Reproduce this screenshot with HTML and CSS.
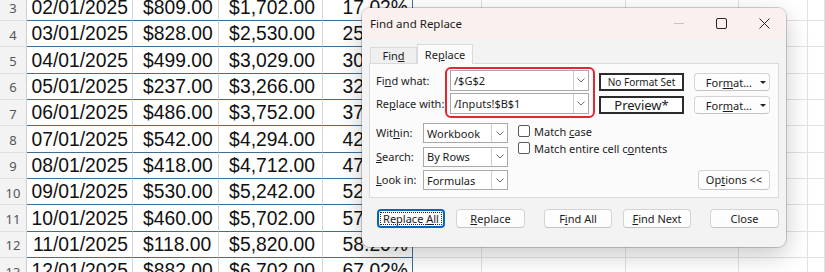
FILE: index.html
```html
<!DOCTYPE html>
<html lang="en">
<head>
  <meta charset="UTF-8" />
  <title>Find and Replace</title>
  <link rel="stylesheet" href="styles.css">
</head>
<body>

  <!-- Worksheet behind the dialog -->
  <div class="sheet">
    <div class="row">
      <div class="rh">3</div>
      <div class="cell date">02/01/2025</div>
      <div class="cell money"><span>$</span><span>809.00</span></div>
      <div class="cell money"><span>$</span><span>1,702.00</span></div>
      <div class="cell pct">17.02%</div>
      <div class="blank"></div><div class="blank"></div><div class="blank"></div><div class="blank"></div><div class="blank"></div>
    </div>
    <div class="row">
      <div class="rh">4</div>
      <div class="cell date">03/01/2025</div>
      <div class="cell money"><span>$</span><span>828.00</span></div>
      <div class="cell money"><span>$</span><span>2,530.00</span></div>
      <div class="cell pct">25.30%</div>
      <div class="blank"></div><div class="blank"></div><div class="blank"></div><div class="blank"></div><div class="blank"></div>
    </div>
    <div class="row">
      <div class="rh">5</div>
      <div class="cell date">04/01/2025</div>
      <div class="cell money"><span>$</span><span>499.00</span></div>
      <div class="cell money"><span>$</span><span>3,029.00</span></div>
      <div class="cell pct">30.29%</div>
      <div class="blank"></div><div class="blank"></div><div class="blank"></div><div class="blank"></div><div class="blank"></div>
    </div>
    <div class="row">
      <div class="rh">6</div>
      <div class="cell date">05/01/2025</div>
      <div class="cell money"><span>$</span><span>237.00</span></div>
      <div class="cell money"><span>$</span><span>3,266.00</span></div>
      <div class="cell pct">32.66%</div>
      <div class="blank"></div><div class="blank"></div><div class="blank"></div><div class="blank"></div><div class="blank"></div>
    </div>
    <div class="row">
      <div class="rh">7</div>
      <div class="cell date">06/01/2025</div>
      <div class="cell money"><span>$</span><span>486.00</span></div>
      <div class="cell money"><span>$</span><span>3,752.00</span></div>
      <div class="cell pct">37.52%</div>
      <div class="blank"></div><div class="blank"></div><div class="blank"></div><div class="blank"></div><div class="blank"></div>
    </div>
    <div class="row">
      <div class="rh">8</div>
      <div class="cell date">07/01/2025</div>
      <div class="cell money"><span>$</span><span>542.00</span></div>
      <div class="cell money"><span>$</span><span>4,294.00</span></div>
      <div class="cell pct">42.94%</div>
      <div class="blank"></div><div class="blank"></div><div class="blank"></div><div class="blank"></div><div class="blank"></div>
    </div>
    <div class="row">
      <div class="rh">9</div>
      <div class="cell date">08/01/2025</div>
      <div class="cell money"><span>$</span><span>418.00</span></div>
      <div class="cell money"><span>$</span><span>4,712.00</span></div>
      <div class="cell pct">47.12%</div>
      <div class="blank"></div><div class="blank"></div><div class="blank"></div><div class="blank"></div><div class="blank"></div>
    </div>
    <div class="row">
      <div class="rh">10</div>
      <div class="cell date">09/01/2025</div>
      <div class="cell money"><span>$</span><span>530.00</span></div>
      <div class="cell money"><span>$</span><span>5,242.00</span></div>
      <div class="cell pct">52.42%</div>
      <div class="blank"></div><div class="blank"></div><div class="blank"></div><div class="blank"></div><div class="blank"></div>
    </div>
    <div class="row">
      <div class="rh">11</div>
      <div class="cell date">10/01/2025</div>
      <div class="cell money"><span>$</span><span>460.00</span></div>
      <div class="cell money"><span>$</span><span>5,702.00</span></div>
      <div class="cell pct">57.02%</div>
      <div class="blank"></div><div class="blank"></div><div class="blank"></div><div class="blank"></div><div class="blank"></div>
    </div>
    <div class="row">
      <div class="rh">12</div>
      <div class="cell date">11/01/2025</div>
      <div class="cell money"><span>$</span><span>118.00</span></div>
      <div class="cell money"><span>$</span><span>5,820.00</span></div>
      <div class="cell pct">58.20%</div>
      <div class="blank"></div><div class="blank"></div><div class="blank"></div><div class="blank"></div><div class="blank"></div>
    </div>
    <div class="row">
      <div class="rh">13</div>
      <div class="cell date">12/01/2025</div>
      <div class="cell money"><span>$</span><span>882.00</span></div>
      <div class="cell money"><span>$</span><span>6,702.00</span></div>
      <div class="cell pct">67.02%</div>
      <div class="blank"></div><div class="blank"></div><div class="blank"></div><div class="blank"></div><div class="blank"></div>
    </div>
  </div>

  <!-- Find and Replace dialog -->
  <div class="dialog">
    <div class="titlebar">
      <span class="title">Find and Replace</span>
      <span class="wb"><svg width="10" height="10" viewBox="0 0 10 10"><line x1="0" y1="5.5" x2="10" y2="5.5" stroke="#c4c4c4" stroke-width="1"/></svg></span>
      <span class="wb"><svg width="11" height="11" viewBox="0 0 11 11"><rect x="0.5" y="0.5" width="10" height="10" rx="1.5" fill="none" stroke="#262626" stroke-width="1"/></svg></span>
      <span class="wb"><svg width="11" height="11" viewBox="0 0 11 11"><path d="M0.5 0.5 L10.5 10.5 M10.5 0.5 L0.5 10.5" stroke="#262626" stroke-width="1"/></svg></span>
    </div>

    <div class="dlg-body">
      <div class="tabs">
        <div class="tab">Fin<u>d</u></div>
        <div class="tab active">Re<u>p</u>lace</div>
      </div>

      <div class="panel">
        <div class="find-row">
          <div class="labels">
            <span class="lbl">Fi<u>n</u>d what:</span>
            <span class="lbl">Re<u>p</u>lace with:</span>
          </div>
          <div class="highlight">
            <div class="combo wide"><span class="val">/$G$2</span><span class="drop"><svg width="8" height="5" viewBox="0 0 8 5"><polyline points="0.5,0.5 4,4 7.5,0.5" fill="none" stroke="#6e6e6e"/></svg></span></div>
            <div class="combo wide"><span class="val">/Inputs!$B$1</span><span class="drop"><svg width="8" height="5" viewBox="0 0 8 5"><polyline points="0.5,0.5 4,4 7.5,0.5" fill="none" stroke="#6e6e6e"/></svg></span></div>
          </div>
          <div class="previews">
            <div class="preview">No Format Set</div>
            <div class="preview big">Preview*</div>
          </div>
          <div class="fmt-btns">
            <div class="btn fmt"><span>For<u>m</u>at...</span><span class="caret"></span></div>
            <div class="btn fmt"><span>For<u>m</u>at...</span><span class="caret"></span></div>
          </div>
        </div>

        <div class="opts">
          <div class="opt-grid">
            <span class="lbl">Wit<u>h</u>in:</span>
            <div class="combo"><span class="val">Workbook</span><span class="drop"><svg width="8" height="5" viewBox="0 0 8 5"><polyline points="0.5,0.5 4,4 7.5,0.5" fill="none" stroke="#6e6e6e"/></svg></span></div>
            <span class="lbl"><u>S</u>earch:</span>
            <div class="combo"><span class="val">By Rows</span><span class="drop"><svg width="8" height="5" viewBox="0 0 8 5"><polyline points="0.5,0.5 4,4 7.5,0.5" fill="none" stroke="#6e6e6e"/></svg></span></div>
            <span class="lbl"><u>L</u>ook in:</span>
            <div class="combo"><span class="val">Formulas</span><span class="drop"><svg width="8" height="5" viewBox="0 0 8 5"><polyline points="0.5,0.5 4,4 7.5,0.5" fill="none" stroke="#6e6e6e"/></svg></span></div>
          </div>
          <div class="checks">
            <div class="check"><span class="box"></span><span>Match <u>c</u>ase</span></div>
            <div class="check"><span class="box"></span><span>Match entire cell c<u>o</u>ntents</span></div>
          </div>
          <div class="btn options">Op<u>t</u>ions &lt;&lt;</div>
        </div>
      </div>

      <div class="actions">
        <div class="btn focus">Replace <u>A</u>ll</div>
        <div class="btn"><u>R</u>eplace</div>
        <div class="btn spaced">F<u>i</u>nd All</div>
        <div class="btn"><u>F</u>ind Next</div>
        <div class="btn spaced">Close</div>
      </div>
    </div>
  </div>

</body>
</html>
```

FILE: styles.css
```css
* {
  box-sizing: border-box;
}

body {
  margin: 0;
  overflow: hidden;
  background: #fff;
  font-family: 'Liberation Sans', Arial, sans-serif;
}

/* Worksheet */
.sheet {
  margin-top: -5.33px;
}

.row {
  display: grid;
  grid-template-columns: 27px 106px 86px 104px 90px 69px 144px 113px 69px 1fr;
  height: 26.33px;
}

.rh {
  background: #f3f3f3;
  border-right: 1px solid #cfcfcf;
  border-bottom: 1px solid #e0e0e0;
  color: #555;
  font: 13px 'Noto Sans', sans-serif;
  display: flex;
  align-items: center;
  justify-content: center;
  padding-top: 2px;
}

.cell {
  border-right: 1px solid #d6d6d6;
  border-bottom: 1px solid #3f6f95;
  color: #111;
  font-size: 19.3px;
  line-height: 22px;
  display: flex;
  align-items: flex-end;
  padding-bottom: 1px;
}

.date {
  justify-content: flex-end;
  padding-right: 4px;
}

.money {
  justify-content: space-between;
  padding: 0 7px 1px 10px;
}

.pct {
  justify-content: flex-end;
  padding-right: 4px;
  border-right-color: #3f6f95;
}

.blank {
  border-right: 1px solid #e2e2e2;
  border-bottom: 1px solid #e2e2e2;
}

/* Dialog */
.dialog {
  position: absolute;
  left: 362px;
  top: 8px;
  width: 424px;
  height: 239px;
  background: #f3f3f3;
  border-radius: 8px;
  overflow: hidden;
  box-shadow: 0 0 0 1px rgba(0, 0, 0, 0.18), 0 8px 24px rgba(0, 0, 0, 0.22);
  font: 11px 'Noto Sans', sans-serif;
  color: #1b1b1b;
}

.titlebar {
  height: 30px;
  background: #faf1ee;
  display: flex;
  align-items: center;
  padding-left: 8px;
}

.title {
  flex: 1;
  font-size: 11.5px;
}

.wb {
  width: 43px;
  height: 30px;
  display: flex;
  align-items: center;
  justify-content: center;
}

.dlg-body {
  padding: 6px 7px 0 7px;
}

.tabs {
  display: flex;
  align-items: flex-end;
  height: 20px;
  margin-bottom: -1px;
  position: relative;
  z-index: 1;
}

.tab {
  width: 47px;
  height: 16px;
  margin: 0 0 1px 1px;
  background: #efefef;
  border: 1px solid #dadada;
  border-bottom: none;
  text-align: center;
  line-height: 15px;
}

.tab.active {
  width: 56px;
  height: 20px;
  margin: 0;
  background: #fbfbfb;
  line-height: 19px;
}

.panel {
  background: #fbfbfb;
  border: 1px solid #dadada;
  padding: 3px 8px 7px 6px;
}

.find-row {
  display: flex;
  align-items: flex-start;
}

.labels {
  width: 69px;
  padding-top: 3px;
  display: flex;
  flex-direction: column;
  gap: 2px;
}

.lbl {
  display: block;
  height: 21px;
  line-height: 21px;
  white-space: nowrap;
}

.highlight {
  border: 2px solid #e3262f;
  border-radius: 6px;
  padding: 1px 4px 2px 3px;
  display: flex;
  flex-direction: column;
  gap: 2px;
}

.combo {
  height: 20px;
  background: #fff;
  border: 1px solid #a9a9a9;
  display: flex;
}

.combo.wide {
  width: 139px;
  height: 21px;
}

.combo .val {
  flex: 1;
  display: flex;
  align-items: center;
  padding-left: 3px;
  white-space: nowrap;
}

.drop {
  width: 15px;
  border-left: 1px solid #cfcfcf;
  display: flex;
  align-items: center;
  justify-content: center;
}

.previews,
.fmt-btns {
  margin-top: 6px;
  display: flex;
  flex-direction: column;
  gap: 5px;
}

.previews {
  margin-left: 4px;
}

.preview {
  width: 85px;
  height: 18px;
  border: 2px solid #2b2b2b;
  background: #fff;
  text-align: center;
  line-height: 14px;
  font-size: 10px;
  white-space: nowrap;
}

.preview.big {
  font-size: 13px;
}

.fmt-btns {
  margin-left: 10px;
}

.btn {
  height: 19px;
  background: #fdfdfd;
  border: 1px solid #d3d3d3;
  border-bottom-color: #c4c4c4;
  border-radius: 4px;
  text-align: center;
  line-height: 17px;
  white-space: nowrap;
}

.btn.fmt {
  width: 76px;
  height: 18px;
  display: flex;
  align-items: center;
  justify-content: flex-end;
  padding-right: 3px;
  gap: 8px;
}

.caret {
  width: 0;
  height: 0;
  border-left: 3px solid transparent;
  border-right: 3px solid transparent;
  border-top: 3px solid #222;
}

.opts {
  margin-top: 5px;
  display: flex;
}

.opt-grid {
  display: grid;
  grid-template-columns: 47px 85px;
  row-gap: 3.5px;
}

.opt-grid .lbl {
  height: 20px;
  line-height: 20px;
}

.opt-grid .drop {
  width: 16px;
}

.checks {
  margin-left: 10px;
  padding-top: 2px;
  display: flex;
  flex-direction: column;
  gap: 5px;
}

.check {
  height: 12px;
  display: flex;
  align-items: center;
  gap: 4px;
  white-space: nowrap;
}

.box {
  width: 12px;
  height: 12px;
  border: 1px solid #5a5a5a;
  border-radius: 2px;
  background: #fff;
}

.btn.options {
  width: 72px;
  height: 20px;
  line-height: 18px;
  margin-left: auto;
  align-self: flex-end;
}

.actions {
  margin-top: 11px;
  padding-left: 8px;
  display: flex;
  gap: 11px;
}

.actions .btn {
  width: 68px;
}

.actions .btn:nth-child(2),
.actions .btn:nth-child(5) {
  width: 69px;
}

.actions .btn.spaced {
  margin-left: 8px;
}

.btn.focus {
  border: 2px solid #0067c0;
  line-height: 15px;
  outline: 1px dotted #222;
  outline-offset: -4px;
}
```
